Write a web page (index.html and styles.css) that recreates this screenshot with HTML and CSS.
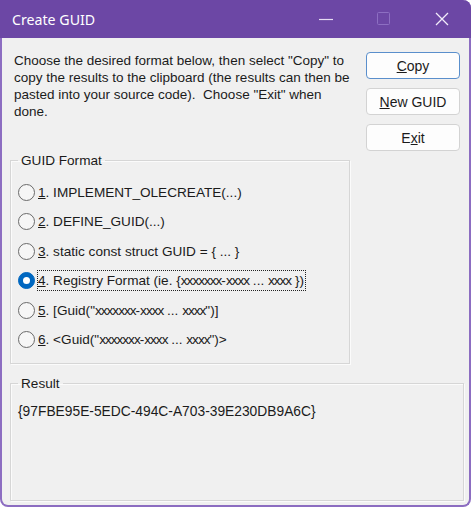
FILE: index.html
```html
<!DOCTYPE html>
<html lang="en">
<head>
<meta charset="utf-8">
<title>Create GUID</title>
<link rel="stylesheet" href="styles.css">
</head>
<body>
<div class="window">
  <div class="titlebar">
    <span class="title">Create GUID</span>
    <div class="caption-buttons">
      <span class="cap"><svg width="14" height="14" viewBox="0 0 14 14"><line x1="0" y1="7.5" x2="14" y2="7.5" stroke="#e6dcf3" stroke-width="1.2"/></svg></span>
      <span class="cap"><svg width="14" height="14" viewBox="0 0 14 14"><rect x="0.5" y="0.5" width="12" height="12" rx="1" fill="none" stroke="#8d6fc2" stroke-width="1"/></svg></span>
      <span class="cap"><svg width="14" height="14" viewBox="0 0 14 14"><path d="M1 1 L13 13 M13 1 L1 13" stroke="#f2ecfa" stroke-width="1.3" fill="none"/></svg></span>
    </div>
  </div>
  <div class="client">
    <div class="top">
      <div class="left">
        <p class="intro">Choose the desired format below, then select "Copy" to<br>copy the results to the clipboard (the results can then be<br>pasted into your source code).&nbsp; Choose "Exit" when<br>done.</p>
        <fieldset class="group format">
          <legend>GUID Format</legend>
          <label class="option"><span class="radio"></span><span class="opt-text"><u>1</u>. IMPLEMENT_OLECREATE(...)</span></label>
          <label class="option"><span class="radio"></span><span class="opt-text"><u>2</u>. DEFINE_GUID(...)</span></label>
          <label class="option"><span class="radio"></span><span class="opt-text"><u>3</u>. static const struct GUID = { ... }</span></label>
          <label class="option focused"><span class="radio checked"></span><span class="opt-text"><u>4</u>. Registry Format (ie. {<span class="xs">xxxxxxx</span>-<span class="xs">xxxx</span> ... <span class="xs">xxxx</span> })</span></label>
          <label class="option"><span class="radio"></span><span class="opt-text"><u>5</u>. [Guid("<span class="xs">xxxxxxx</span>-<span class="xs">xxxx</span> ... <span class="xs">xxxx</span>")]</span></label>
          <label class="option"><span class="radio"></span><span class="opt-text"><u>6</u>. &lt;Guid("<span class="xs">xxxxxxx</span>-<span class="xs">xxxx</span> ... <span class="xs">xxxx</span>")&gt;</span></label>
        </fieldset>
      </div>
      <div class="buttons">
        <button class="btn default"><u>C</u>opy</button>
        <button class="btn"><u>N</u>ew GUID</button>
        <button class="btn">E<u>x</u>it</button>
      </div>
    </div>
    <fieldset class="group result">
      <legend>Result</legend>
      <div class="guid">{97FBE95E-5EDC-494C-A703-39E230DB9A6C}</div>
    </fieldset>
  </div>
</div>
</body>
</html>
```
FILE: styles.css
```css
html, body {
  margin: 0;
  background: #ffffff;
}
body {
  font-family: "Liberation Sans", Arial, sans-serif;
  color: #1b1b1b;
}
.window {
  width: 471px;
  height: 507px;
  box-sizing: border-box;
  display: flex;
  flex-direction: column;
  background: #f0f0f0;
  border: 2px solid #8c6dc1;
  border-top: 0;
  border-radius: 0 8px 8px 8px;
}
.titlebar {
  height: 38px;
  margin: 0 -2px;
  flex: none;
  display: flex;
  align-items: center;
  background: #6c47a5;
  border-top-right-radius: 8px;
}
.title {
  flex: 1;
  padding-left: 12px;
  font-family: "Noto Sans", "Open Sans", sans-serif;
  font-size: 14.2px;
  color: #ffffff;
}
.caption-buttons {
  display: flex;
  align-self: stretch;
}
.cap {
  width: 58px;
  display: flex;
  align-items: center;
  justify-content: center;
}
.client {
  flex: 1;
  display: flex;
  flex-direction: column;
  padding: 14px 5px 4px 8px;
}
.top {
  display: flex;
}
.left {
  width: 340px;
}
.intro {
  margin: 0 0 0 4px;
  font-size: 13.5px;
  line-height: 17px;
  white-space: nowrap;
}
.group {
  margin: 0;
  min-width: 0;
  border: 1px solid #d6d6d6;
  box-shadow: inset 1px 1px 0 #fbfbfb, 1px 1px 0 #fbfbfb;
}
.group legend {
  padding: 0 3px;
  font-size: 13.6px;
  line-height: 17px;
}
.format {
  margin-top: 31.5px;
  padding: 9px 0 8.5px 7px;
}
.option {
  display: flex;
  align-items: center;
  height: 29.5px;
  font-size: 13.6px;
  white-space: nowrap;
}
.radio {
  width: 17px;
  height: 17px;
  box-sizing: border-box;
  flex: none;
  margin-right: 2px;
  border: 1px solid #6a6a6a;
  border-radius: 50%;
  background: #f6f6f6;
}
.radio.checked {
  display: flex;
  align-items: center;
  justify-content: center;
  background: #0067c0;
  border-color: #0067c0;
}
.radio.checked::after {
  content: "";
  width: 7px;
  height: 7px;
  border-radius: 50%;
  background: #ffffff;
}
.opt-text {
  line-height: 17px;
  padding: 1px 1px 1px 0;
  border: 1px solid transparent;
}
.xs {
  letter-spacing: -1px;
}
.focused .opt-text {
  border: 1px dotted #222;
}
.buttons {
  margin-left: auto;
  margin-right: 4px;
  width: 94px;
  display: flex;
  flex-direction: column;
  gap: 9px;
}
.btn {
  height: 27px;
  padding: 0;
  border: 1px solid #d3d3d3;
  border-radius: 4px;
  background: #fdfdfd;
  font-family: "Liberation Sans", Arial, sans-serif;
  font-size: 14px;
  color: #1b1b1b;
}
.btn.default {
  border-color: #5a8fcc;
}
.result {
  flex: 1;
  margin-top: 10.5px;
  padding: 11px 0 0 7px;
}
.guid {
  font-size: 13.8px;
  line-height: 17px;
}
```
